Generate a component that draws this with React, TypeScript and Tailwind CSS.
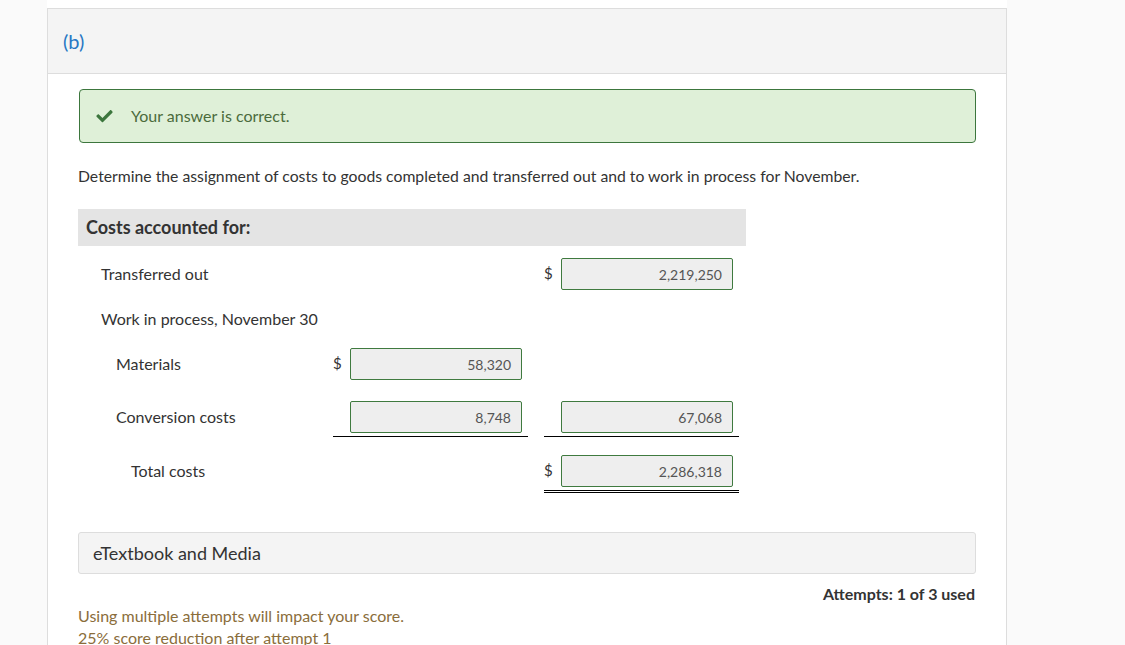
import React from "react";

const font = { fontFamily: "Lato, 'Open Sans', sans-serif" };

function Money({ value, dollar, line }: { value: string; dollar?: boolean; line?: "single" | "double" }) {
  const lineCls =
    line === "single"
      ? "pb-[3px] border-b border-black"
      : line === "double"
      ? "pb-[3px] border-b-[3px] border-double border-black"
      : "";
  return (
    <div className={`w-[195px] flex items-center ${lineCls}`}>
      <div className="w-[17px] text-[15px] text-[#333] leading-none -mt-[1px]">{dollar ? "$" : ""}</div>
      <div className="w-[172px] h-[32px] bg-[#eeeeee] border border-[#3f7a3f] rounded-[2px] flex items-center justify-end pr-[10px] text-[14px] text-[#555]">
        {value}
      </div>
    </div>
  );
}

export default function App() {
  return (
    <div className="w-[1125px] h-[645px] overflow-hidden bg-[#fafafa]" style={font}>
      <div className="ml-[47px] w-[960px] h-full bg-white pt-[8px]">
        <div className="border border-[#dddddd] border-b-0 h-full">
          <div className="h-[65px] bg-[#f4f4f4] border-b border-[#dddddd] flex items-center pl-[15px]">
            <span className="text-[20px] text-[#2778c4]">(b)</span>
          </div>
          <div className="px-[30px] pt-[15px]">
            <div className="ml-[1px] h-[54px] bg-[#dff0d8] border border-[#3c763d] rounded-[4px] flex items-center pl-[16px]">
              <svg width="17" height="14" viewBox="0 30 512 440" className="text-[#3c763d]">
                <path
                  fill="currentColor"
                  d="M173.898 439.404l-166.4-166.4c-9.997-9.997-9.997-26.206 0-36.204l36.203-36.204c9.997-9.998 26.207-9.998 36.204 0L192 312.69 432.095 72.596c9.997-9.997 26.207-9.997 36.204 0l36.203 36.204c9.997 9.997 9.997 26.206 0 36.204l-294.4 294.401c-9.998 9.997-26.207 9.997-36.204-.001z"
                />
              </svg>
              <span className="ml-[18px] text-[16px] text-[#4b6b3c]">Your answer is correct.</span>
            </div>
            <p className="mt-[23px] text-[15.75px] leading-[20px] text-[#333]">
              Determine the assignment of costs to goods completed and transferred out and to work in process for November.
            </p>
            <div className="mt-[23px] w-[668px] h-[37px] bg-[#e4e4e4] flex items-center pl-[8px]">
              <span className="text-[18px] font-bold text-[#333]">Costs accounted for:</span>
            </div>
            <div className="text-[16px] text-[#333]">
              <div className="mt-[12px] flex items-center h-[32px]">
                <div className="w-[255px] pl-[23px]">Transferred out</div>
                <div className="w-[195px]" />
                <div className="w-[16px]" />
                <Money value="2,219,250" dollar />
              </div>
              <div className="mt-[13px] flex items-center h-[32px]">
                <div className="w-[255px] pl-[23px] whitespace-nowrap">Work in process, November 30</div>
              </div>
              <div className="mt-[13px] flex items-center h-[32px]">
                <div className="w-[255px] pl-[38px]">Materials</div>
                <Money value="58,320" dollar />
              </div>
              <div className="mt-[21px] flex items-start">
                <div className="w-[255px] pl-[38px] h-[32px] flex items-center">Conversion costs</div>
                <Money value="8,748" line="single" />
                <div className="w-[16px]" />
                <Money value="67,068" line="single" />
              </div>
              <div className="mt-[18px] flex items-start">
                <div className="w-[255px] pl-[53px] h-[32px] flex items-center">Total costs</div>
                <div className="w-[195px]" />
                <div className="w-[16px]" />
                <Money value="2,286,318" dollar line="double" />
              </div>
            </div>
            <div className="mt-[39px] h-[42px] bg-[#f4f4f4] border border-[#dddddd] rounded-[3px] flex items-center pl-[14px]">
              <span className="text-[18px] text-[#333]">eTextbook and Media</span>
            </div>
            <div className="mt-[10px] pr-[1px] text-right text-[16px] font-bold text-[#333] leading-[20px]">Attempts: 1 of 3 used</div>
            <div className="mt-[1px] text-[16px] leading-[22px] text-[#8a6d3b]">
              <div>Using multiple attempts will impact your score.</div>
              <div>25% score reduction after attempt 1</div>
            </div>
          </div>
        </div>
      </div>
    </div>
  );
}
